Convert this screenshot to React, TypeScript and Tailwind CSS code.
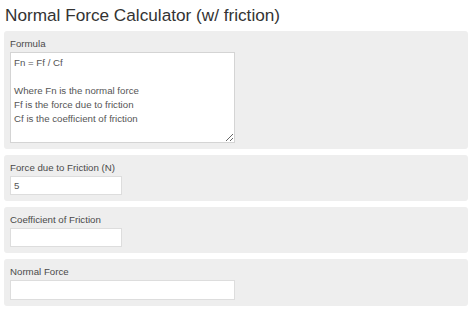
import React from "react";

function Panel({ label, children }: { label: string; children: React.ReactNode }) {
  return (
    <div className="w-[464px] ml-[4px] bg-[#eeeeee] rounded-[3px] px-[6px] pt-[6px] pb-[6px]">
      <div className="h-[14px] leading-[14px] text-[9.7px] text-[#4a4a4a] mb-[1px]">{label}</div>
      {children}
    </div>
  );
}

export default function App() {
  return (
    <div className="w-[474px] h-[310px] bg-white pt-[5px] font-['Liberation_Sans',Arial,sans-serif]">
      <h1 className="ml-[5px] h-[20px] leading-[20px] text-[17.2px] text-[#333333] font-normal mb-[6px]">
        Normal Force Calculator (w/ friction)
      </h1>
      <div className="flex flex-col gap-[6px]">
        <Panel label="Formula">
          <textarea
            readOnly
            className="block w-[225px] h-[91px] bg-white border border-[#d4d4d4] p-[3px] text-[9.7px] leading-[14px] text-[#555555] outline-none"
            defaultValue={"Fn = Ff / Cf\n\nWhere Fn is the normal force\nFf is the force due to friction\nCf is the coefficient of friction"}
          />
        </Panel>
        <Panel label="Force due to Friction (N)">
          <input
            className="block w-[112px] h-[19px] bg-white border border-[#dddddd] px-[3px] text-[9.7px] text-[#555555] outline-none"
            defaultValue="5"
          />
        </Panel>
        <Panel label="Coefficient of Friction">
          <input
            className="block w-[112px] h-[19px] bg-white border border-[#dddddd] px-[3px] text-[9.7px] text-[#555555] outline-none"
            defaultValue=""
          />
        </Panel>
        <Panel label="Normal Force">
          <input
            className="block w-[225px] h-[20px] bg-white border border-[#dddddd] px-[3px] text-[9.7px] text-[#555555] outline-none"
            defaultValue=""
          />
        </Panel>
      </div>
    </div>
  );
}
